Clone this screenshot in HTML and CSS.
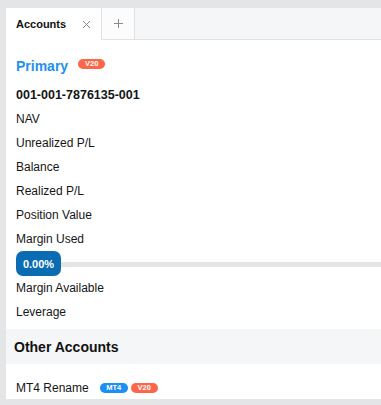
FILE: index.html
```html
<!DOCTYPE html>
<html>
<head>
<meta charset="utf-8">
<link rel="stylesheet" href="styles.css">
</head>
<body>
<div class="panel">
  <div class="tabbar">
    <div class="tab active">
      <span class="tab-label">Accounts</span>
      <svg class="tab-close" width="9" height="9" viewBox="0 0 9 9"><path d="M1 1L8 8M8 1L1 8" stroke="#8a8a8a" stroke-width="1"/></svg>
    </div>
    <div class="tab add">
      <svg width="11" height="11" viewBox="0 0 11 11"><path d="M5.5 1V10M1 5.5H10" stroke="#8a8a8a" stroke-width="1"/></svg>
    </div>
  </div>
  <div class="content">
    <div class="primary">
      <span class="primary-name">Primary</span>
      <span class="badge v20 up">V20</span>
    </div>
    <div class="row acct">001-001-7876135-001</div>
    <div class="row">NAV</div>
    <div class="row">Unrealized P/L</div>
    <div class="row">Balance</div>
    <div class="row">Realized P/L</div>
    <div class="row">Position Value</div>
    <div class="row">Margin Used</div>
    <div class="progress">
      <div class="pill">0.00%</div>
      <div class="track"></div>
    </div>
    <div class="row">Margin Available</div>
    <div class="row">Leverage</div>
  </div>
  <div class="section-head">Other Accounts</div>
  <div class="other">
    <span class="other-name">MT4 Rename</span>
    <span class="badge mt4">MT4</span>
    <span class="badge v20">V20</span>
  </div>
</div>
</body>
</html>
```

FILE: styles.css
```css
html, body {
  margin: 0;
  padding: 0;
}
body {
  background: #e4e5e7;
  padding: 8px 0 0 6px;
  height: 405px;
  box-sizing: border-box;
  overflow: hidden;
  font-family: "Liberation Sans", Arial, sans-serif;
  color: #151515;
}
.panel {
  background: #ffffff;
  height: 391px;
  overflow: hidden;
}
.tabbar {
  display: flex;
  height: 31px;
  background: #f5f6f8;
  border-bottom: 1px solid #e1e2e4;
  box-sizing: content-box;
}
.tab {
  display: flex;
  align-items: center;
  height: 32px;
  box-sizing: border-box;
}
.tab.active {
  width: 96px;
  background: #ffffff;
  padding-left: 10px;
  border-right: 1px solid #e1e2e4;
}
.tab-label {
  font-size: 11px;
  font-weight: bold;
  color: #111;
  width: 66px;
}
.tab-close {
  display: block;
}
.tab.add {
  width: 33px;
  height: 31px;
  background: #fcfcfd;
  border-right: 1px solid #e1e2e4;
  justify-content: center;
}
.tab.add svg {
  display: block;
}
.content {
  padding: 14px 0 0 10px;
}
.primary {
  display: flex;
  align-items: center;
  height: 24px;
}
.primary-name {
  font-size: 14px;
  font-weight: bold;
  color: #2191ee;
  line-height: 24px;
  margin-right: 10px;
}
.badge {
  display: inline-flex;
  align-items: center;
  justify-content: center;
  height: 10px;
  width: 27px;
  border-radius: 5px;
  font-size: 7.5px;
  font-weight: bold;
  color: #fff;
  line-height: 10px;
}
.badge.up {
  margin-bottom: 4px;
}
.v20 {
  background: #fd6748;
}
.mt4 {
  background: #1b8ff3;
  width: 28px;
  margin-right: 3px;
}
.row {
  font-size: 12px;
  line-height: 24px;
  height: 24px;
}
.row.acct {
  font-weight: bold;
  font-size: 12.5px;
  margin-top: 5px;
}
.progress {
  display: flex;
  align-items: center;
  height: 25px;
}
.pill {
  width: 45px;
  height: 25px;
  border-radius: 7px;
  background: #0b6cb4;
  color: #fff;
  font-size: 11px;
  font-weight: bold;
  display: flex;
  align-items: center;
  justify-content: center;
  flex-shrink: 0;
}
.track {
  flex: 1;
  height: 5px;
  margin-top: 2px;
  background: #e4e4e4;
}
.section-head {
  margin-top: 5px;
  height: 35px;
  line-height: 36px;
  background: #f5f6f8;
  padding-left: 8px;
  font-size: 14px;
  font-weight: bold;
  color: #111;
}
.other {
  display: flex;
  align-items: center;
  height: 24px;
  margin-top: 12px;
  padding-left: 10px;
}
.other-name {
  font-size: 12px;
  line-height: 24px;
  margin-right: 11px;
}
```
